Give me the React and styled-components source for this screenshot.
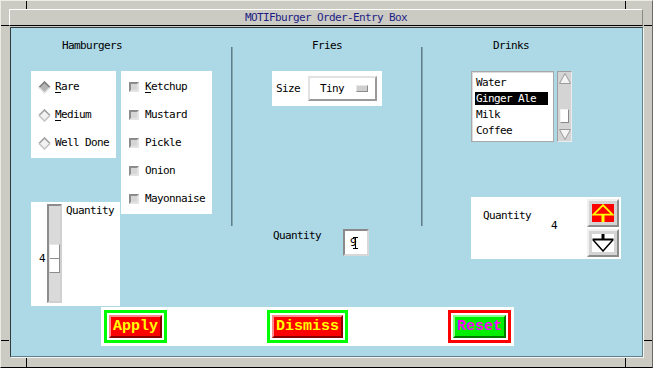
import React from "react";
import styled, { createGlobalStyle } from "styled-components";

const GlobalStyle = createGlobalStyle`
  html, body {
    margin: 0;
    padding: 0;
  }
  body {
    background: #cbcac3;
    font-family: "DejaVu Sans Mono", "Liberation Mono", monospace;
    font-size: 11px;
    letter-spacing: -0.62px;
    color: #000;
  }
`;

// resize-handle notches on the window frame
const mark = (x, y, w, h) =>
  `linear-gradient(#000, #000) ${x}px ${y}px / ${w}px ${h}px no-repeat`;

const frameMarks = [
  mark(26, 0, 1, 9),
  mark(625, 0, 1, 9),
  mark(0, 25, 9, 1),
  mark(644, 25, 9, 1),
  mark(0, 340, 9, 1),
  mark(644, 340, 9, 1),
  mark(26, 358, 1, 10),
  mark(625, 358, 1, 10),
].join(", ");

const Window = styled.div`
  width: 653px;
  height: 368px;
  box-sizing: border-box;
  border-style: solid;
  border-width: 1px;
  border-color: #ecebe6 #6a6a66 #000 #ecebe6;
  padding: 8px 9px 10px 8px;
  display: flex;
  flex-direction: column;
  background: ${frameMarks}, #cbcac3;
  background-origin: border-box;
`;

const TitleBar = styled.div`
  height: 17px;
  box-sizing: border-box;
  border-style: solid;
  border-width: 1px;
  border-color: #fff #8a8a86 #000 #fff;
  color: #1c1c86;
  text-align: center;
  line-height: 15px;
`;

const Client = styled.div`
  margin: 1px 0 0 1px;
  height: 330px;
  box-sizing: border-box;
  border: 1px solid;
  border-color: #2e3c42 #5f808c #5f808c #2e3c42;
  box-shadow: 1px 1px 0 #f4f4f0;
  background: #add8e6;
  display: flex;
  flex-direction: column;
`;

const MainRow = styled.div`
  display: flex;
  align-items: flex-start;
`;

const Column = styled.div`
  ${(p) => (p.$width ? `width: ${p.$width}px;` : "flex: 1;")}
  flex-shrink: 0;
  box-sizing: border-box;
  padding: 12px 0 0 ${(p) => p.$padLeft || 0}px;
  display: flex;
  flex-direction: column;
  align-items: ${(p) => p.$align || "flex-start"};
`;

const SectionTitle = styled.div`
  line-height: 12px;
  margin-left: ${(p) => p.$offset || 0}px;
`;

const Divider = styled.div`
  width: 2px;
  height: 179px;
  margin-top: 19px;
  flex-shrink: 0;
  background: linear-gradient(to right, #5d7f8c 0 1px, #86a6b2 1px);
`;

const BoxRow = styled.div`
  display: flex;
  align-items: flex-start;
  gap: 1px;
  margin-top: 19px;
`;

const Stack = styled.div`
  display: flex;
  flex-direction: column;
`;

const ToggleBox = styled.div`
  width: ${(p) => p.$width}px;
  box-sizing: border-box;
  background: #fff;
  padding: 2px 0 1px ${(p) => p.$padLeft}px;
`;

const ToggleRow = styled.div`
  height: 28px;
  display: flex;
  align-items: center;
  gap: ${(p) => p.$gap}px;
  line-height: 12px;
`;

const Mnemonic = styled.span`
  text-decoration: underline;
  text-underline-offset: 2px;
`;

const DiamondSvg = styled.svg`
  display: block;
  flex-shrink: 0;
`;

const CheckSquare = styled.span`
  width: 10px;
  height: 10px;
  box-sizing: border-box;
  flex-shrink: 0;
  border: 2px solid;
  border-color: #8c8c8c #e4e4e4 #e4e4e4 #8c8c8c;
  background: #d6d6d6;
`;

const SliderBox = styled.div`
  width: 89px;
  height: 104px;
  box-sizing: border-box;
  margin-top: 44px;
  background: #fff;
  padding: 2px 0 0 8px;
  display: flex;
  align-items: flex-start;
  line-height: 12px;
`;

const SliderValue = styled.span`
  width: 6px;
  margin-top: 49px;
`;

const Trough = styled.div`
  width: 15px;
  height: 99px;
  box-sizing: border-box;
  margin-left: 2px;
  border: 2px solid;
  border-color: #8c8c8c #d0d0d0 #d0d0d0 #8c8c8c;
  background: #dadada;
`;

const Thumb = styled.div`
  height: 29px;
  margin-top: 38px;
  box-sizing: border-box;
  border-style: solid;
  border-width: 1px;
  border-color: #e6e6e6 #8c8c8c #8c8c8c #e6e6e6;
  background: linear-gradient(to bottom, #fff 0 13px, #8c8c8c 13px 14px, #fff 14px);
`;

const SliderLabel = styled.span`
  margin: 1px 0 0 4px;
`;

const OptionBox = styled.div`
  width: 110px;
  box-sizing: border-box;
  margin-top: 19px;
  padding: 5px 5px 5px 4px;
  background: #fff;
  display: flex;
  align-items: center;
  gap: 8px;
  line-height: 12px;
`;

const OptionButton = styled.div`
  width: 69px;
  height: 25px;
  box-sizing: border-box;
  border: 2px solid;
  border-color: #e2e2e2 #9a9a9a #9a9a9a #e2e2e2;
  background: #fff;
  display: flex;
  align-items: center;
  padding-left: 10px;
`;

const OptionIndicator = styled.span`
  width: 12px;
  height: 7px;
  box-sizing: border-box;
  margin-left: 12px;
  border: 1px solid;
  border-color: #e8e8e8 #8c8c8c #8c8c8c #e8e8e8;
  background: #cfcfcf;
`;

const QuantityRow = styled.div`
  align-self: flex-start;
  margin: 123px 0 0 40px;
  display: flex;
  align-items: flex-start;
  gap: 22px;
  line-height: 12px;
`;

const RowLabel = styled.span`
  margin-top: 1px;
`;

const TextField = styled.div`
  width: 26px;
  height: 27px;
  box-sizing: border-box;
  border: 2px solid;
  border-color: #8a8a8a #d8d8d8 #d8d8d8 #8a8a8a;
  background: #fff;
  display: flex;
  align-items: center;
  padding-left: 5px;
`;

const Caret = styled.span`
  display: inline-block;
  width: 5px;
  height: 12px;
  margin-left: -3px;
  background:
    linear-gradient(#000, #000) center / 1px 100% no-repeat,
    linear-gradient(#000, #000) top / 5px 1px no-repeat,
    linear-gradient(#000, #000) bottom / 5px 1px no-repeat;
`;

const ListFrame = styled.div`
  margin-top: 19px;
  display: flex;
  gap: 3px;
`;

const List = styled.div`
  width: 83px;
  height: 71px;
  box-sizing: border-box;
  border: 1px solid #a8a8a8;
  box-shadow: inset 1px 1px 0 #dcdcdc;
  background: #fff;
  padding-top: 4px;
`;

const ListItem = styled.div`
  height: 13px;
  line-height: 13px;
  margin: 0 5px 3px 3px;
  padding-left: 1px;
  background: ${(p) => (p.$selected ? "#000" : "transparent")};
  color: ${(p) => (p.$selected ? "#fff" : "#000")};
`;

const ScrollBar = styled.div`
  width: 15px;
  height: 71px;
  box-sizing: border-box;
  border: 1px solid;
  border-color: #a0a0a0 #ececec #ececec #a0a0a0;
  background: #d4d4d4;
  padding: 1px 0 1px;
  display: flex;
  flex-direction: column;
  align-items: center;
`;

const ScrollThumb = styled.div`
  width: 9px;
  height: 14px;
  box-sizing: border-box;
  margin-top: 25px;
  border: 1px solid;
  border-color: #f2f2f2 #888 #888 #f2f2f2;
  background: #fff;
`;

const ScrollArrowSvg = styled.svg`
  display: block;
  margin-top: ${(p) => (p.$bottom ? "auto" : "0")};
`;

const QtyBox = styled.div`
  width: 150px;
  height: 62px;
  box-sizing: border-box;
  margin-top: 55px;
  padding: 2px;
  background: #fff;
  display: flex;
`;

const QtyInfo = styled.div`
  flex: 1;
  padding: 11px 0 0 10px;
  line-height: 12px;
`;

const QtyValue = styled.div`
  margin: -2px 0 0 68px;
`;

const ArrowStack = styled.div`
  display: flex;
  flex-direction: column;
  gap: 2px;
`;

const ArrowButton = styled.div`
  width: 32px;
  height: 28px;
  box-sizing: border-box;
  border: 2px solid;
  border-color: #f0f0f0 #8c8c8c #8c8c8c #f0f0f0;
  padding: 3px;
  background: #d4d4d4;
`;

const PixmapSvg = styled.svg`
  display: block;
`;

const ButtonBar = styled.div`
  width: 413px;
  height: 39px;
  box-sizing: border-box;
  margin: 1px 0 0 90px;
  padding: 3px;
  background: #fff;
  display: flex;
  justify-content: space-between;
`;

const ActionRing = styled.div`
  border: 3px solid ${(p) => p.$ring};
  padding: 2px;
  background: #fff;
`;

const ActionButton = styled.div`
  height: 23px;
  box-sizing: border-box;
  border: 2px solid;
  border-color: ${(p) => `${p.$light} ${p.$dark} ${p.$dark} ${p.$light}`};
  background: ${(p) => p.$fill};
  color: ${(p) => p.$text};
  padding: 0 2px;
  font-family: "Liberation Mono", "DejaVu Sans Mono", monospace;
  font-weight: bold;
  font-size: 15px;
  letter-spacing: 0;
  line-height: 19px;
`;

const redButton = { $fill: "#ff0000", $light: "#ff8c8c", $dark: "#8b0000", $text: "#ffff00" };
const greenButton = { $fill: "#00ee00", $light: "#8cff8c", $dark: "#007a00", $text: "#ff00ff" };

function Diamond({ selected }) {
  return (
    <DiamondSvg viewBox="0 0 13 13" width="13" height="13">
      <polygon points="6.5,1 12,6.5 6.5,12 1,6.5" fill={selected ? "#b4b4b4" : "#f2f2f2"} />
      <polyline
        points="1,6.5 6.5,1 12,6.5"
        fill="none"
        stroke={selected ? "#7c7c7c" : "#a0a0a0"}
        strokeWidth="1.6"
      />
      <polyline
        points="1,6.5 6.5,12 12,6.5"
        fill="none"
        stroke={selected ? "#e4e4e4" : "#c4c4c4"}
        strokeWidth="1.6"
      />
    </DiamondSvg>
  );
}

function ScrollArrow({ down }) {
  const points = down ? "0.5,0.5 11.5,0.5 6,10.5" : "6,0.5 11.5,10.5 0.5,10.5";
  return (
    <ScrollArrowSvg $bottom={down} viewBox="0 0 12 11" width="12" height="11">
      <polygon points={points} fill="#f4f4f4" stroke="#9a9a9a" strokeWidth="1" />
    </ScrollArrowSvg>
  );
}

function UpPixmap() {
  return (
    <PixmapSvg viewBox="0 0 22 18" width="22" height="18">
      <rect width="22" height="18" fill="#ff0000" />
      <polygon points="11,1.2 20.6,10.6 1.4,10.6" fill="none" stroke="#ffff00" strokeWidth="1.8" />
      <rect x="9.5" y="10.5" width="3" height="7.5" fill="#ffff00" />
    </PixmapSvg>
  );
}

function DownPixmap() {
  return (
    <PixmapSvg viewBox="0 0 22 18" width="22" height="18">
      <rect width="22" height="18" fill="#fff" />
      <rect x="9.5" y="0" width="3" height="5" fill="#000" />
      <rect x="0.5" y="4.5" width="21" height="2" fill="#000" />
      <polyline points="1.2,6 11,17 20.8,6" fill="none" stroke="#000" strokeWidth="1.5" />
    </PixmapSvg>
  );
}

const doneness = [
  { key: "rare", mnemonic: "R", rest: "are", selected: true },
  { key: "medium", mnemonic: "M", rest: "edium" },
  { key: "well", mnemonic: "", rest: "Well Done" },
];

const toppings = [
  { key: "ketchup", mnemonic: "K", rest: "etchup" },
  { key: "mustard", mnemonic: "", rest: "Mustard" },
  { key: "pickle", mnemonic: "", rest: "Pickle" },
  { key: "onion", mnemonic: "", rest: "Onion" },
  { key: "mayo", mnemonic: "", rest: "Mayonnaise" },
];

const drinks = ["Water", "Ginger Ale", "Milk", "Coffee"];

export default function App() {
  return (
    <>
      <GlobalStyle />
      <Window>
        <TitleBar>MOTIFburger Order-Entry Box</TitleBar>
        <Client>
          <MainRow>
            <Column $width={220} $padLeft={20}>
              <SectionTitle $offset={31}>Hamburgers</SectionTitle>
              <BoxRow>
                <Stack>
                  <ToggleBox $width={85} $padLeft={7}>
                    {doneness.map((d) => (
                      <ToggleRow key={d.key} $gap={4}>
                        <Diamond selected={d.selected} />
                        <span>
                          {d.mnemonic && <Mnemonic>{d.mnemonic}</Mnemonic>}
                          {d.rest}
                        </span>
                      </ToggleRow>
                    ))}
                  </ToggleBox>
                  <SliderBox>
                    <SliderValue>4</SliderValue>
                    <Trough>
                      <Thumb />
                    </Trough>
                    <SliderLabel>Quantity</SliderLabel>
                  </SliderBox>
                </Stack>
                <ToggleBox $width={91} $padLeft={8}>
                  {toppings.map((t) => (
                    <ToggleRow key={t.key} $gap={6}>
                      <CheckSquare />
                      <span>
                        {t.mnemonic && <Mnemonic>{t.mnemonic}</Mnemonic>}
                        {t.rest}
                      </span>
                    </ToggleRow>
                  ))}
                </ToggleBox>
              </BoxRow>
            </Column>

            <Divider />

            <Column $width={188} $align="center">
              <SectionTitle>Fries</SectionTitle>
              <OptionBox>
                <span>Size</span>
                <OptionButton>
                  <span>Tiny</span>
                  <OptionIndicator />
                </OptionButton>
              </OptionBox>
              <QuantityRow>
                <RowLabel>Quantity</RowLabel>
                <TextField>
                  <span>9</span>
                  <Caret />
                </TextField>
              </QuantityRow>
            </Column>

            <Divider />

            <Column $padLeft={48}>
              <SectionTitle $offset={22}>Drinks</SectionTitle>
              <ListFrame>
                <List>
                  {drinks.map((d) => (
                    <ListItem key={d} $selected={d === "Ginger Ale"}>
                      {d}
                    </ListItem>
                  ))}
                </List>
                <ScrollBar>
                  <ScrollArrow />
                  <ScrollThumb />
                  <ScrollArrow down />
                </ScrollBar>
              </ListFrame>
              <QtyBox>
                <QtyInfo>
                  <div>Quantity</div>
                  <QtyValue>4</QtyValue>
                </QtyInfo>
                <ArrowStack>
                  <ArrowButton>
                    <UpPixmap />
                  </ArrowButton>
                  <ArrowButton>
                    <DownPixmap />
                  </ArrowButton>
                </ArrowStack>
              </QtyBox>
            </Column>
          </MainRow>

          <ButtonBar>
            <ActionRing $ring="#00ff00">
              <ActionButton {...redButton}>Apply</ActionButton>
            </ActionRing>
            <ActionRing $ring="#00ff00">
              <ActionButton {...redButton}>Dismiss</ActionButton>
            </ActionRing>
            <ActionRing $ring="#ff0000">
              <ActionButton {...greenButton}>Reset</ActionButton>
            </ActionRing>
          </ButtonBar>
        </Client>
      </Window>
    </>
  );
}
